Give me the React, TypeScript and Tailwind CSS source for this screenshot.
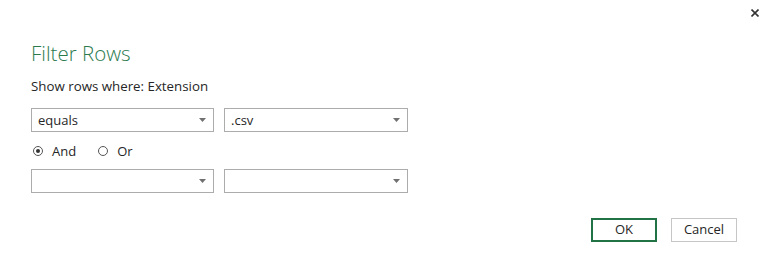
import { useState } from "react";

const Caret = () => (
  <svg width="7" height="4" viewBox="0 0 7 4" className="shrink-0">
    <path d="M0 0 L7 0 L3.5 4 Z" fill="#707070" />
  </svg>
);

const Select = ({ value, width }: { value: string; width: string }) => (
  <div
    className={`${width} h-[24px] border border-[#acacac] bg-white flex items-center justify-between pl-[6px] pr-[7px]`}
  >
    <span className="text-[13px] leading-none text-[#262626]">{value}</span>
    <Caret />
  </div>
);

const Radio = ({ checked, label, onClick }: { checked: boolean; label: string; onClick: () => void }) => (
  <button type="button" onClick={onClick} className="flex items-center gap-[9px]">
    <span className="w-[10px] h-[10px] rounded-full border border-[#555] flex items-center justify-center">
      {checked && <span className="w-[4px] h-[4px] rounded-full bg-[#333]" />}
    </span>
    <span className="text-[13px] leading-[20px] text-[#262626]">{label}</span>
  </button>
);

export default function App() {
  const [mode, setMode] = useState<"and" | "or">("and");

  return (
    <div
      className="w-[768px] h-[273px] bg-white flex flex-col"
      style={{ fontFamily: '"Open Sans", "Noto Sans", sans-serif' }}
    >
      <div className="flex justify-end pt-[9px] pr-[9px]">
        <svg width="8" height="8" viewBox="0 0 8 8">
          <path d="M0.5 0.5 L7.5 7.5 M7.5 0.5 L0.5 7.5" stroke="#333" strokeWidth="1.6" />
        </svg>
      </div>

      <div className="pl-[31px] flex flex-col">
        <h1 className="mt-[22px] text-[20.5px] leading-[28px] font-light text-[#2a7a4e]">Filter Rows</h1>
        <p className="mt-[10px] text-[13.3px] leading-[18px] text-[#262626]">Show rows where: Extension</p>

        <div className="mt-[13px] flex gap-[10px]">
          <Select value="equals" width="w-[183px]" />
          <Select value=".csv" width="w-[184px]" />
        </div>

        <div className="mt-[9px] flex items-center gap-[22px] pl-[2px]">
          <Radio checked={mode === "and"} label="And" onClick={() => setMode("and")} />
          <Radio checked={mode === "or"} label="Or" onClick={() => setMode("or")} />
        </div>

        <div className="mt-[8px] flex gap-[10px]">
          <Select value="" width="w-[183px]" />
          <Select value="" width="w-[184px]" />
        </div>
      </div>

      <div className="mt-[25px] flex justify-end gap-[14px] pr-[31px]">
        <button className="w-[66px] h-[24px] border-2 border-[#217346] text-[13px] text-[#262626]">OK</button>
        <button className="w-[66px] h-[24px] border border-[#c6c6c6] text-[13px] text-[#262626]">Cancel</button>
      </div>
    </div>
  );
}
